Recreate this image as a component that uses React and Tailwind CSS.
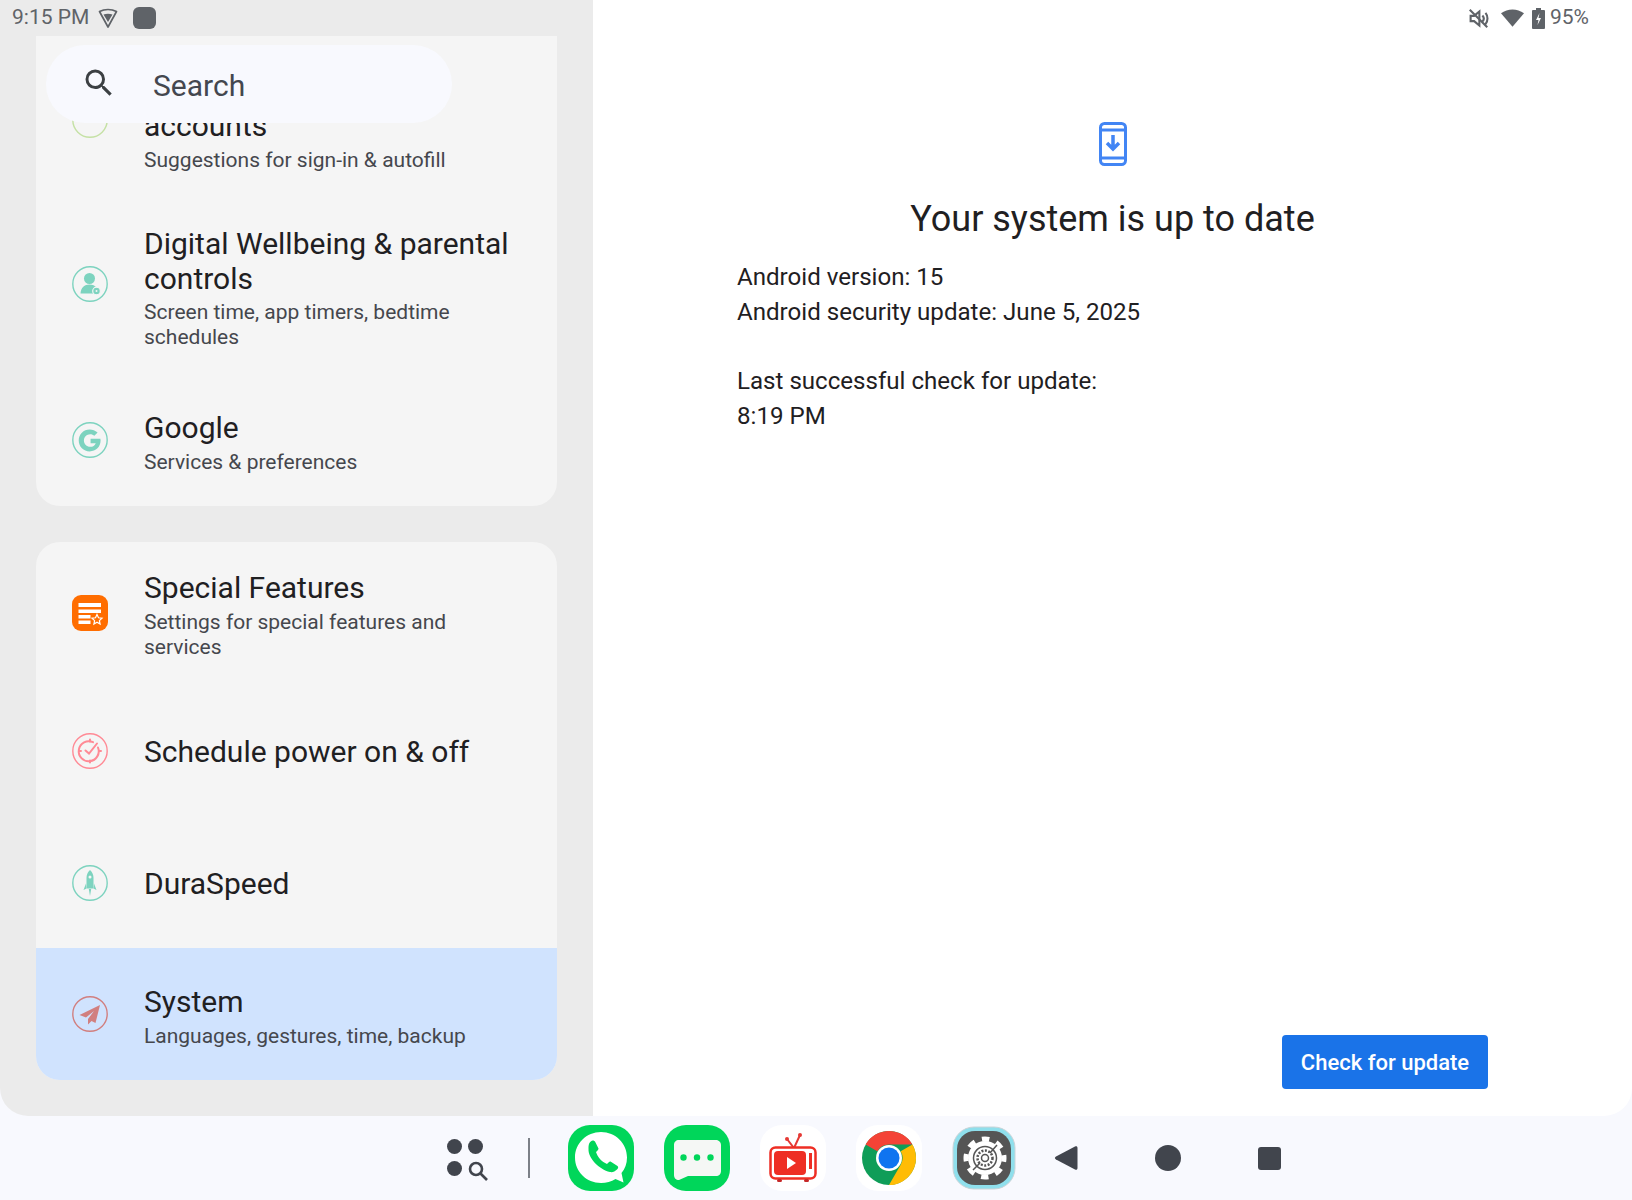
const rowBase = 'flex items-center gap-9 pl-9 pr-[41px]';

function Ring({ color, children }) {
  return (
    <svg width="36" height="36" viewBox="0 0 36 36" className={`shrink-0 ${color}`}>
      <circle cx="18" cy="18" r="17.2" fill="none" stroke="currentColor" strokeWidth="1.4" />
      {children}
    </svg>
  );
}

function Row({ icon, title, sub, className, textClass = '', subClass = 'mt-[5px]' }) {
  return (
    <div className={`${rowBase} ${className}`}>
      {icon}
      <div className={`min-w-0 flex-1 ${textClass}`}>
        <p className="text-[30px] leading-[35px] text-[#1f2022]">{title}</p>
        {sub && <p className={`${subClass} text-[21px] leading-[25px] text-[#45474d]`}>{sub}</p>}
      </div>
    </div>
  );
}

const WellbeingIcon = (
  <Ring color="text-[#7dd3bf]">
    <circle cx="17.500" cy="12.500" r="5.500" fill="currentColor" />
    <path d="M8.500 27.500c.5-6 4-9 9-9 3 0 5.500 1 7 3-2.500 1-3.500 3.500-2.500 6z" fill="currentColor" />
    <circle cx="24.500" cy="25" r="3.800" fill="currentColor" stroke="#f5f5f5" strokeWidth="1.200" />
    <circle cx="24.500" cy="25" r="1" fill="#f5f5f5" />
  </Ring>
);

const GoogleIcon = (
  <Ring color="text-[#7dd3bf]">
    <path
      transform="translate(-2.700 -2.200) scale(1.150)"
      d="M27 16.500h-8.500v3.800h4.500c-.7 2-2.500 3.200-4.800 3.200-3.100 0-5.500-2.400-5.500-5.500s2.400-5.500 5.500-5.500c1.400 0 2.600.5 3.600 1.400l2.800-2.800C22.400 9.500 20.300 8.500 17.700 8.500c-5.300 0-9.500 4.200-9.500 9.500s4.200 9.500 9.500 9.500c5.500 0 9.500-3.900 9.500-9.400 0-.6-.1-1.100-.2-1.600z"
      fill="currentColor"
    />
  </Ring>
);

const SpecialIcon = (
  <svg width="36" height="36" viewBox="0 0 36 36" className="shrink-0">
    <rect width="36" height="36" rx="9" fill="#ff6d00" />
    <g fill="#fff">
      <rect x="6.500" y="8" width="22.500" height="4" />
      <rect x="6.500" y="14.500" width="22.500" height="3.500" />
      <rect x="6.500" y="20" width="12" height="3.500" />
      <rect x="6.500" y="25.500" width="12" height="3.500" />
    </g>
    <path
      d="M25 19.500l1.500 3.300 3.500.4-2.600 2.400.7 3.500-3.100-1.800-3.100 1.800.7-3.500-2.600-2.400 3.500-.4z"
      fill="#ff6d00"
      stroke="#fff"
      strokeWidth="1.200"
    />
  </svg>
);

const ScheduleIcon = (
  <Ring color="text-[#ff8a95]">
    <g fill="none" stroke="currentColor" strokeWidth="2" strokeLinecap="round">
      <path d="M26 14.500a10 10 0 1 1-5-5.300" />
      <path d="M18 6.500v2M18 27.500v2M7 18h2M27 18h2" />
      <path d="M13.500 17.500l3.500 3 8-10" />
    </g>
  </Ring>
);

const DuraIcon = (
  <Ring color="text-[#7dd3bf]">
    <path d="M18 5c2.500 2 3.500 5 3.500 8v10.500h-7V13c0-3 1-6 3.500-8z" fill="currentColor" />
    <circle cx="18" cy="12" r="1.500" fill="#f5f5f5" />
    <path d="M14 18.500l-2.500 6.500 3-1.500zM22 18.500l2.500 6.500-3-1.500zM16.800 24h2.400L18 31z" fill="currentColor" />
  </Ring>
);

const SystemIcon = (
  <Ring color="text-[#d17f7f]">
    <path d="M28 9L7.500 19l6.500 2.500 8-6.500-6 8v5.500l3.500-3.500 4 2z" fill="currentColor" />
  </Ring>
);

function Dock({ children }) {
  return <div className="flex h-[66px] w-[66px] shrink-0 items-center justify-center">{children}</div>;
}

const PhoneApp = (
  <svg width="66" height="66" viewBox="0 0 66 66">
    <rect width="66" height="66" rx="22" fill="#00d65a" />
    <path d="M33 7c14.500 0 26 11.200 26 25.500 0 6-2 11.500-5.500 15.500l2 9.500-8-3.500c-4.200 2.500-9.200 4-14.500 4C18.500 58 7 46.800 7 32.500S18.500 7 33 7z" fill="#fff" />
    <path
      d="M21 19c1-2.500 3-4 4.500-3.500l1.500 1 3.500 7c.3 1-1.500 2.500-2.500 3.500 1.500 5 6 10 11 12 1-1 2.500-3 3.500-2.500l7 4.500c1 .7 1 2-.5 3.500-2 2-4.500 3-7 2.500C31 44.500 20 33 20.500 24c0-2 0-3.500.500-5z"
      fill="#00d65a"
    />
  </svg>
);

const MessagesApp = (
  <svg width="66" height="66" viewBox="0 0 66 66">
    <rect width="66" height="66" rx="22" fill="#00d65a" />
    <path d="M15 15h37c2 0 5 1.500 5 5v26c0 3-2 5-5 5H24l-9 4c-3 0-5-2-5-5V20c0-3 2-5 5-5z" fill="#f5f7f5" />
    <circle cx="19.500" cy="32.500" r="3.200" fill="#00d65a" />
    <circle cx="33" cy="32.500" r="3.200" fill="#00d65a" />
    <circle cx="46.500" cy="32.500" r="3.200" fill="#00d65a" />
  </svg>
);

const TvApp = (
  <svg width="66" height="66" viewBox="0 0 66 66">
    <rect width="66" height="66" rx="22" fill="#fff" />
    <path d="M27 14l7 9 6-13" fill="none" stroke="#e53935" strokeWidth="2" />
    <circle cx="27" cy="14" r="2" fill="#e53935" />
    <circle cx="40" cy="10" r="2" fill="#e53935" />
    <rect x="10.500" y="22.500" width="45" height="31" rx="5" fill="#fff" stroke="#ee2e24" strokeWidth="2.500" />
    <rect x="14" y="26" width="32" height="24" rx="4" fill="#ee2e24" />
    <path d="M27 32l9 6-9 6z" fill="#fff" />
    <rect x="49" y="28" width="3" height="16" fill="#ee2e24" />
    <rect x="17" y="54" width="5" height="3" rx="1.500" fill="#c62828" />
    <rect x="44" y="54" width="5" height="3" rx="1.500" fill="#c62828" />
  </svg>
);

const ChromeApp = (
  <svg width="66" height="66" viewBox="0 0 66 66">
    <rect width="66" height="66" rx="22" fill="#fff" />
    <circle cx="33" cy="33" r="27" fill="#0f9d58" />
    <path d="M9.600 19.500A27 27 0 0 1 56.400 19.500H33a13.500 13.500 0 0 0-11.700 6.800z" fill="#f44336" />
    <path d="M56.400 19.500A27 27 0 0 1 33 60l11.700-20.200a13.500 13.500 0 0 0 0-13.500z" fill="#ffbc05" />
    <circle cx="33" cy="33" r="13" fill="#fff" />
    <circle cx="33" cy="33" r="10.500" fill="#0f74f0" />
  </svg>
);

const SettingsApp = (
  <svg width="66" height="66" viewBox="0 0 66 66">
    <rect x="1" y="2" width="62" height="62" rx="21" fill="#8fdfec" stroke="#c9d4d8" strokeWidth="1" />
    <rect x="5" y="6" width="54" height="54" rx="18" fill="#555555" />
    <circle cx="33" cy="33" r="17" fill="#fff" />
    <circle cx="33" cy="33" r="19" fill="none" stroke="#fff" strokeWidth="5" strokeDasharray="7.500 7.420" strokeDashoffset="3.700" />
    <circle cx="33" cy="33" r="11.500" fill="none" stroke="#555" strokeWidth="1.500" />
    <circle cx="33" cy="33" r="7.500" fill="none" stroke="#555" strokeWidth="2.500" strokeDasharray="2 1.500" />
    <circle cx="33" cy="33" r="3.500" fill="none" stroke="#555" strokeWidth="1.500" />
    <path d="M21 45l7-7M38 28l7-8" stroke="#555" strokeWidth="1.500" />
  </svg>
);

export default function App() {
  return (
    <div className="flex h-[1200px] w-[1632px] flex-col overflow-hidden bg-[#f8f9fe] font-['Roboto',sans-serif]">
      <div className="flex h-[1116px]">
        {/* left settings pane */}
        <div className="relative w-[593px] shrink-0 rounded-bl-[28px] bg-[#ebebeb]">
          <div className="flex h-9 items-center pl-3 text-[21px] text-[#5f6368]">
            <span>9:15 PM</span>
            <svg width="22" height="22" viewBox="0 0 22 22" className="ml-2" fill="none" stroke="#5f6368" strokeWidth="1.700">
              <path d="M2.500 4.500c5-2.500 12-2.500 17 0L11 20z" strokeLinejoin="round" />
              <path d="M6.500 7.500c3-1 6-1 9 0L11 15z" fill="#5f6368" stroke="none" />
            </svg>
            <div className="ml-[14px] h-[22px] w-[23px] rounded-md bg-[#5f6368]" />
          </div>

          <div className="mx-9 flex flex-col gap-9">
            <div className="h-[470px] overflow-hidden rounded-b-[24px] bg-[#f5f5f5]">
              <Row
                className="mt-2.5 h-[148px]"
                textClass="pt-[41px]"
                icon={<Ring color="text-[#c5e1a5]" />}
                title="accounts"
                sub="Suggestions for sign-in & autofill"
              />
              <Row
                className="h-[180px]"
                textClass="pt-[7px]"
                subClass="mt-[4px]"
                icon={WellbeingIcon}
                title="Digital Wellbeing & parental controls"
                sub="Screen time, app timers, bedtime schedules"
              />
              <Row className="h-[132px]" textClass="pt-1" icon={GoogleIcon} title="Google" sub="Services & preferences" />
            </div>

            <div className="overflow-hidden rounded-[24px] bg-[#f5f5f5]">
              <Row
                className="h-[142px]"
                textClass="pt-1"
                icon={SpecialIcon}
                title="Special Features"
                sub="Settings for special features and services"
              />
              <Row className="h-[134px]" icon={ScheduleIcon} title="Schedule power on & off" />
              <Row className="h-[130px]" icon={DuraIcon} title="DuraSpeed" />
              <Row
                className="h-[132px] bg-[#d0e3fe]"
                textClass="pt-1"
                icon={SystemIcon}
                title="System"
                sub="Languages, gestures, time, backup"
              />
            </div>
          </div>

          {/* search pill floats over the scrolled list */}
          <div className="absolute left-[46px] top-[45px] flex h-[78px] w-[406px] items-center rounded-full bg-[#f8f9fe] pl-[35px]">
            <svg width="36" height="36" viewBox="0 0 24 24" fill="#3c4043" className="-mt-[3px]">
              <path d="M15.500 14h-.79l-.28-.27A6.470 6.470 0 0 0 16 9.500 6.500 6.500 0 1 0 9.500 16c1.610 0 3.090-.59 4.230-1.570l.27.28v.79l5 4.990L20.490 19l-4.990-5zm-6 0C7.010 14 5 11.990 5 9.500S7.010 5 9.500 5 14 7.010 14 9.500 11.990 14 9.500 14z" />
            </svg>
            <span className="ml-9 mt-0.5 text-[30px] text-[#44474f]">Search</span>
          </div>
        </div>

        {/* right update pane */}
        <div className="flex min-w-0 flex-1 flex-col rounded-br-[28px] bg-white">
          <div className="flex h-9 items-center justify-end pr-[43px] text-[21px] text-[#5f6368]">
            <svg width="21" height="21" viewBox="0 0 24 24" fill="none" stroke="#5f6368" strokeWidth="2.400">
              <path d="M3 9h4l6-5v16l-6-5H3z" />
              <path d="M16.500 8.500c1.800 2 1.800 5 0 7M20 5.500c3 3.500 3 9.500 0 13M2 2l20 20" />
            </svg>
            <svg width="23" height="18" viewBox="0 0 24 18" className="ml-[12px]" fill="#5f6368">
              <path d="M12 18L0 4c7-5.300 17-5.300 24 0z" />
            </svg>
            <svg width="13" height="21" viewBox="0 0 13 21" className="ml-[8px]">
              <path d="M4 0h5v2h3a1 1 0 0 1 1 1v17a1 1 0 0 1-1 1H1a1 1 0 0 1-1-1V3a1 1 0 0 1 1-1h3z" fill="#5f6368" />
              <path d="M7.500 5L4 12h2.500l-1 5L9 10H6.500z" fill="#fff" />
            </svg>
            <span className="ml-[5px]">95%</span>
          </div>

          <div className="flex flex-col items-center pt-[86px]">
            <svg width="30" height="44" viewBox="0 0 30 44" fill="none">
              <rect x="2.500" y="1.500" width="25" height="41" rx="4" stroke="#4285f4" strokeWidth="3" />
              <path d="M3 8h24M3 36h24" stroke="#4285f4" strokeWidth="3" />
              <path d="M15 13v14M9 21l6 6 6-6" stroke="#4285f4" strokeWidth="3.500" />
            </svg>
            <h1 className="mt-[29px] text-[36px] leading-[48px] font-normal text-[#1f2022]">Your system is up to date</h1>
          </div>

          <div className="mt-[17px] pl-[144px] text-[24.1px] leading-[35px] text-[#1f2022]">
            <p>Android version: 15</p>
            <p>Android security update: June 5, 2025</p>
            <p className="mt-[34px]">Last successful check for update:</p>
            <p>8:19 PM</p>
          </div>

          <div className="mt-auto flex justify-end pb-[27px] pr-[144px]">
            <button
              type="button"
              className="flex h-[54px] w-[206px] items-center justify-center rounded bg-[#1a73e8] text-[22px] font-medium text-white"
            >
              Check for update
            </button>
          </div>
        </div>
      </div>

      {/* taskbar */}
      <div className="flex h-[84px] items-center pl-[447px]">
        <div className="mt-1 grid grid-cols-[15px_20px] gap-x-[6px] gap-y-[7px]">
          <span className="h-[15px] w-[15px] rounded-full bg-[#41454d]" />
          <span className="h-[15px] w-[15px] rounded-full bg-[#41454d]" />
          <span className="h-[15px] w-[15px] rounded-full bg-[#41454d]" />
          <svg width="20" height="20" viewBox="0 0 20 20" fill="none" stroke="#41454d" strokeWidth="2.600">
            <circle cx="8" cy="8" r="6" />
            <path d="M12.500 12.500L19 19" />
          </svg>
        </div>
        <div className="ml-10 h-10 w-0.5 bg-[#7c8088]" />
        <div className="ml-[38px] flex gap-[30px]">
          <Dock>{PhoneApp}</Dock>
          <Dock>{MessagesApp}</Dock>
          <Dock>{TvApp}</Dock>
          <Dock>{ChromeApp}</Dock>
          <Dock>{SettingsApp}</Dock>
        </div>
        <svg width="24" height="26" viewBox="0 0 24 26" className="ml-[36px]">
          <path d="M21 1.500L2 11.500c-1.500 1-1.500 2 0 3l19 10c1.500.7 2.500 0 2.500-1.500V3c0-1.500-1-2.200-2.500-1.500z" fill="#41454d" />
        </svg>
        <div className="ml-[77px] h-[26px] w-[26px] rounded-full bg-[#41454d]" />
        <div className="ml-[77px] h-[23px] w-[23px] rounded-[3px] bg-[#41454d]" />
      </div>
    </div>
  );
}
